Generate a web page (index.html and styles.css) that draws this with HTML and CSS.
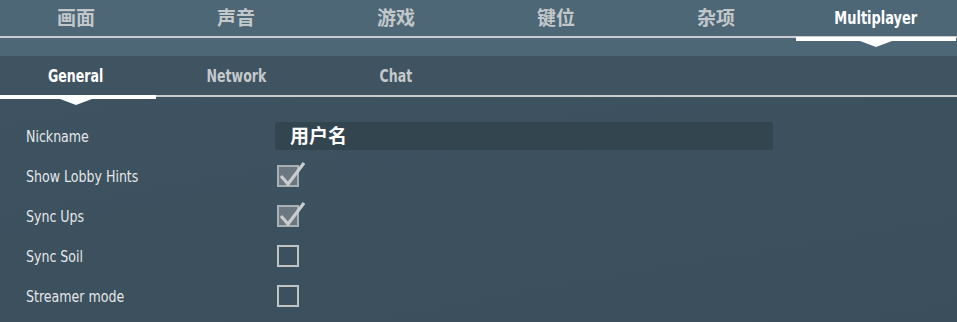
FILE: index.html
```html
<!DOCTYPE html>
<html>
<head>
<meta charset="utf-8">
<link rel="stylesheet" href="styles.css">
</head>
<body>
<div class="page">
  <nav class="tabs top">
    <div class="tab cjk">画面</div>
    <div class="tab cjk">声音</div>
    <div class="tab cjk">游戏</div>
    <div class="tab cjk">键位</div>
    <div class="tab cjk">杂项</div>
    <div class="tab active"><span class="t">Multiplayer</span></div>
  </nav>
  <nav class="tabs sub">
    <div class="tab active"><span class="t">General</span></div>
    <div class="tab"><span class="t">Network</span></div>
    <div class="tab"><span class="t">Chat</span></div>
  </nav>
  <main class="content">
    <div class="row">
      <div class="label"><span class="t">Nickname</span></div>
      <div class="input">用户名</div>
    </div>
    <div class="row">
      <div class="label"><span class="t">Show Lobby Hints</span></div>
      <div class="check checked"><svg viewBox="0 0 30 30" width="30" height="30"><path d="M4 17 L11 25 L27 4" fill="none" stroke="#c9cdd0" stroke-width="3.2" stroke-linejoin="miter"/></svg></div>
    </div>
    <div class="row">
      <div class="label"><span class="t">Sync Ups</span></div>
      <div class="check checked"><svg viewBox="0 0 30 30" width="30" height="30"><path d="M4 17 L11 25 L27 4" fill="none" stroke="#c9cdd0" stroke-width="3.2" stroke-linejoin="miter"/></svg></div>
    </div>
    <div class="row">
      <div class="label"><span class="t">Sync Soil</span></div>
      <div class="check"></div>
    </div>
    <div class="row">
      <div class="label"><span class="t">Streamer mode</span></div>
      <div class="check"></div>
    </div>
  </main>
</div>
</body>
</html>
```
FILE: styles.css
```css
* { box-sizing: border-box; }
html, body { margin: 0; padding: 0; }
body {
  width: 957px;
  height: 322px;
  overflow: hidden;
  background: linear-gradient(170deg, #3f5462 0%, #3a4e5b 100%);
  font-family: "DejaVu Sans Condensed", "DejaVu Sans", "Noto Sans CJK SC", sans-serif;
  font-stretch: condensed;
}
.page { width: 957px; height: 322px; overflow: hidden; }
.t { display: inline-block; white-space: nowrap; }
.tabs {
  display: flex;
  margin-left: -4px;
  position: relative;
}
.tab {
  width: 160px;
  flex: none;
  text-align: center;
  font-weight: bold;
  color: #c4c9cc;
  position: relative;
}
.tab.active { color: #ffffff; }
.tabs.top {
  background: #4d6777;
  height: 56px;
}
.tabs.top::after {
  content: "";
  position: absolute;
  left: 0; right: -4px;
  top: 36px;
  height: 2px;
  background: #c9cbcc;
}
.tabs.top .tab {
  font-size: 18px;
  line-height: 20px;
  padding-top: 8px;
  height: 38px;
}
.tabs.top .t { transform: scaleX(0.8); }
.tabs .tab.cjk {
  font-family: "Noto Sans CJK SC", sans-serif;
  font-size: 19px;
  font-weight: bold;
  padding-top: 7px;
  color: #c2c7ca;
}
.tab.active::before {
  content: "";
  position: absolute;
  left: 0; right: 0;
  height: 4px;
  background: #ffffff;
  z-index: 2;
}
.tab.active::after {
  content: "";
  position: absolute;
  left: 50%;
  margin-left: -16px;
  border-left: 16px solid transparent;
  border-right: 16px solid transparent;
  border-top: 6px solid #ffffff;
  z-index: 2;
}
.tabs.top .tab.active::before { top: 37px; }
.tabs.top .tab.active::after { top: 41px; }
.tabs.sub {
  background: #3f5361;
  height: 42px;
}
.tabs.sub::after {
  content: "";
  position: absolute;
  left: 0; right: -4px;
  top: 39px;
  height: 2px;
  background: #c9cbcc;
}
.tabs.sub .tab {
  font-size: 17px;
  line-height: 20px;
  padding-top: 10px;
  height: 41px;
}
.tabs.sub .t { transform: scaleX(0.82); }
.tabs.sub .tab.active::before { top: 39px; }
.tabs.sub .tab.active::after { top: 43px; }
.content {
  padding-top: 18px;
}
.row {
  display: flex;
  align-items: center;
  height: 40px;
}
.label {
  width: 275px;
  padding-left: 26px;
  font-size: 16px;
  color: #e4e7e9;
}
.label .t { transform: scaleX(0.875); transform-origin: left center; }
.input {
  width: 498px;
  height: 28px;
  background: #33454f;
  border-radius: 3px;
  padding-left: 15px;
  font-family: "Noto Sans CJK SC", sans-serif;
  font-weight: bold;
  font-size: 19px;
  line-height: 26px;
  color: #ffffff;
}
.check {
  width: 22px;
  height: 22px;
  margin-left: 2px;
  border: 2px solid #bfc3c6;
  position: relative;
}
.check.checked {
  background: #6b7882;
  border-color: #a9b0b5;
}
.check svg {
  position: absolute;
  left: -2px;
  top: -8px;
}
```
